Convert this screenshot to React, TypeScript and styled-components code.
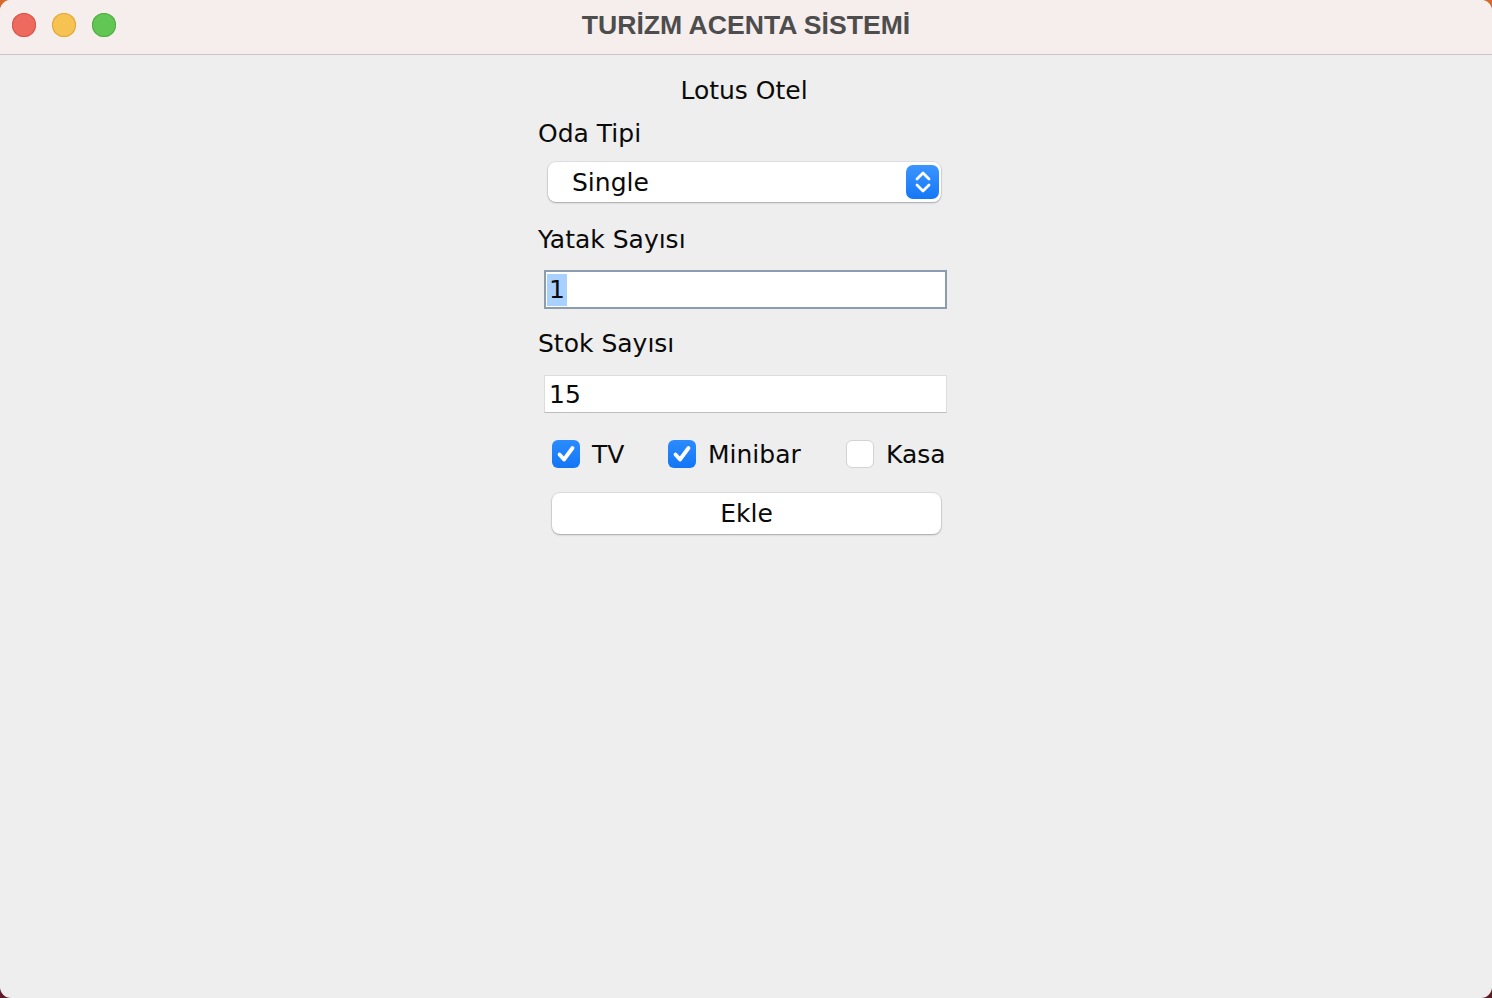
import styled, { createGlobalStyle } from "styled-components";

const GlobalStyle = createGlobalStyle`
    html, body {
        margin: 0;
        padding: 0;
        width: 1492px;
        height: 998px;
        overflow: hidden;
        background: linear-gradient(180deg, #d8692a 0%, #a33a2c 50%, #5e1a26 100%);
    }
`

const Window = styled.div`
    width: 1492px;
    height: 998px;
    border-radius: 11px;
    overflow: hidden;
    background-color: #eeeeee;
    display: flex;
    flex-direction: column;
    font-family: "DejaVu Sans", "Noto Sans", sans-serif;
    color: #0a0a0a;
`

const TitleBar = styled.div`
    height: 55px;
    flex-shrink: 0;
    box-sizing: border-box;
    padding-bottom: 4px;
    background-color: #f6eeed;
    border-bottom: 1px solid #c9c5c5;
    display: flex;
    align-items: center;
    position: relative;
    justify-content: center;
`

const Lights = styled.div`
    position: absolute;
    left: 12px;
    top: 13px;
    display: flex;
    gap: 16px;
`

const Light = styled.span<{ $color: string; $edge: string }>`
    width: 24px;
    height: 24px;
    border-radius: 50%;
    background-color: ${p => p.$color};
    box-shadow: inset 0 0 0 1px ${p => p.$edge};
`

const WindowTitle = styled.div`
    font-family: "Liberation Sans", Arial, sans-serif;
    font-weight: bold;
    font-size: 26.6px;
    color: #4d4d4d;
`

const Form = styled.div`
    width: 416px;
    margin: 0 auto;
    padding-top: 19px;
    display: flex;
    flex-direction: column;
`

const Heading = styled.div`
    height: 32px;
    display: flex;
    align-items: center;
    justify-content: center;
    font-size: 25px;
    padding-right: 4px;
`

const Label = styled.div<{ $top: number }>`
    height: 32px;
    margin-top: ${p => p.$top}px;
    display: flex;
    align-items: center;
    font-size: 25px;
`

const Combo = styled.div`
    margin: 13px 13px 0 10px;
    height: 40px;
    box-sizing: border-box;
    background: #fff;
    border-radius: 8px;
    box-shadow: 0 0 0 1px rgba(0, 0, 0, 0.06), 0 1px 2px rgba(0, 0, 0, 0.25);
    display: flex;
    align-items: center;
    justify-content: space-between;
    padding: 0 2px 0 24px;
    font-size: 25px;
`

const ComboArrow = styled.div`
    width: 33px;
    height: 34px;
    border-radius: 7px;
    background: linear-gradient(180deg, #3b95ff 0%, #1677f7 100%);
    display: flex;
    align-items: center;
    justify-content: center;
`

const Field = styled.div<{ $top: number; $focused?: boolean }>`
    margin: ${p => p.$top}px 0 0 6px;
    height: ${p => (p.$focused ? 39 : 38)}px;
    width: 403px;
    box-sizing: border-box;
    background: #fff;
    border: ${p => (p.$focused ? "2px solid #8c9bb0" : "1px solid #dcdcdc")};
    border-bottom-color: ${p => (p.$focused ? "#8c9bb0" : "#bdbdbd")};
    display: flex;
    align-items: center;
    padding-left: ${p => (p.$focused ? 1 : 4)}px;
    font-size: 25px;
`

const Selected = styled.span`
    background: #a9d1ff;
    padding: 0 2px;
    line-height: 32px;
`

const CheckRow = styled.div`
    margin-top: 27px;
    height: 28px;
    display: flex;
    align-items: center;
    padding-left: 14px;
`

const CheckItem = styled.label<{ $width: number }>`
    width: ${p => p.$width}px;
    flex-shrink: 0;
    display: flex;
    align-items: center;
    gap: 12px;
    font-size: 25px;
`

const Box = styled.span<{ $checked: boolean }>`
    width: 28px;
    height: 28px;
    box-sizing: border-box;
    border-radius: 6px;
    display: flex;
    align-items: center;
    justify-content: center;
    background: ${p => (p.$checked ? "linear-gradient(180deg, #2b8cff 0%, #1475f5 100%)" : "#fff")};
    border: ${p => (p.$checked ? "none" : "1px solid #d3d3d3")};
`

const Button = styled.div`
    margin: 25px 13px 0 14px;
    height: 41px;
    background: #fff;
    border-radius: 8px;
    box-shadow: 0 0 0 1px rgba(0, 0, 0, 0.07), 0 1px 2px rgba(0, 0, 0, 0.25);
    display: flex;
    align-items: center;
    justify-content: center;
    font-size: 25px;
`

function Check({ checked, label, width }: { checked: boolean; label: string; width: number }) {
    return (
        <CheckItem $width={width}>
            <Box $checked={checked}>
                {checked && (
                    <svg width="22" height="22" viewBox="0 0 22 22">
                        <path d="M4.5 11.5 L9 16.5 L17.5 5" fill="none" stroke="#fff" strokeWidth="3.8" strokeLinecap="round" strokeLinejoin="round"/>
                    </svg>
                )}
            </Box>
            {label}
        </CheckItem>
    )
}

export default function App() {
    return (
        <>
            <GlobalStyle/>
            <Window>
                <TitleBar>
                    <Lights>
                        <Light $color="#ee6a5f" $edge="#d85346"/>
                        <Light $color="#f6c251" $edge="#dfa535"/>
                        <Light $color="#62c655" $edge="#4eac40"/>
                    </Lights>
                    <WindowTitle>TURİZM ACENTA SİSTEMİ</WindowTitle>
                </TitleBar>
                <Form>
                    <Heading>Lotus Otel</Heading>
                    <Label $top={11}>Oda Tipi</Label>
                    <Combo>
                        Single
                        <ComboArrow>
                            <svg width="20" height="28" viewBox="0 0 20 28">
                                <path d="M4 11 L10 5 L16 11 M4 17 L10 23 L16 17" fill="none" stroke="#fff" strokeWidth="2.8" strokeLinecap="round" strokeLinejoin="round"/>
                            </svg>
                        </ComboArrow>
                    </Combo>
                    <Label $top={21}>Yatak Sayısı</Label>
                    <Field $top={15} $focused><Selected>1</Selected></Field>
                    <Label $top={18}>Stok Sayısı</Label>
                    <Field $top={16}>15</Field>
                    <CheckRow>
                        <Check checked label="TV" width={116}/>
                        <Check checked label="Minibar" width={178}/>
                        <Check checked={false} label="Kasa" width={110}/>
                    </CheckRow>
                    <Button>Ekle</Button>
                </Form>
            </Window>
        </>
    )
}
